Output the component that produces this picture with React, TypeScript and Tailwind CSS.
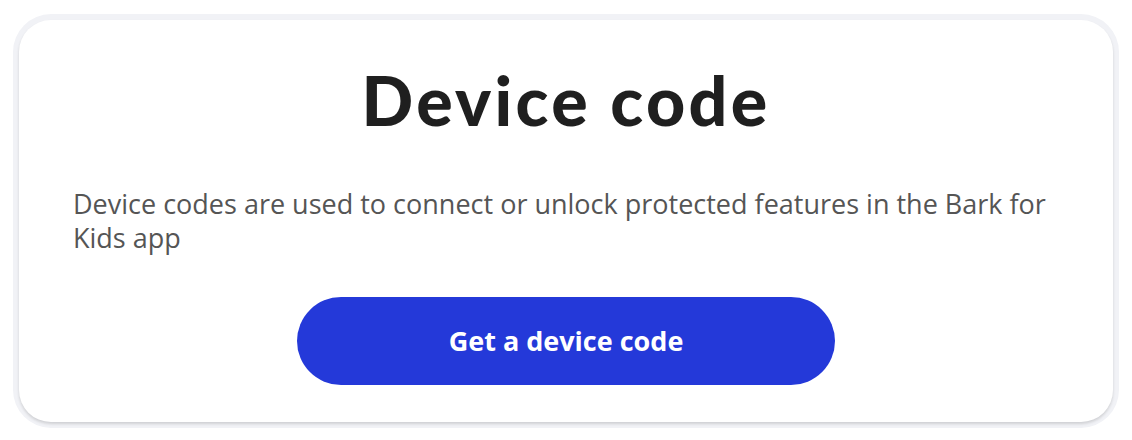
import React from 'react';

const App: React.FC = () => {
  return (
    <div className="w-[1132px] h-[440px] bg-white pl-[13px] pt-[14px]">
      <div className="w-[1106px] rounded-[38px] bg-[#f1f2f6] p-[6px]">
        <div className="flex h-[402px] flex-col items-center rounded-[32px] bg-white px-[54px] pt-[46px] shadow-[0_2px_3px_rgba(0,0,0,0.14)]">
          {/* Title */}
          <h1 className="font-['Lato',sans-serif] text-[68px] font-black leading-none tracking-[3.3px] text-[#1f1f1f]">
            Device code
          </h1>

          {/* Description */}
          <p className="mt-[53px] w-full font-['Open_Sans',sans-serif] text-[27px] leading-[34px] text-[#555555]">
            Device codes are used to connect or unlock protected features in the Bark for Kids app
          </p>

          {/* Action */}
          <button className="mt-[42px] flex h-[88px] w-[538px] items-center justify-center rounded-full bg-[#2439d9] font-['Open_Sans',sans-serif] text-[27px] font-bold text-white">
            Get a device code
          </button>
        </div>
      </div>
    </div>
  );
};

export default App;
